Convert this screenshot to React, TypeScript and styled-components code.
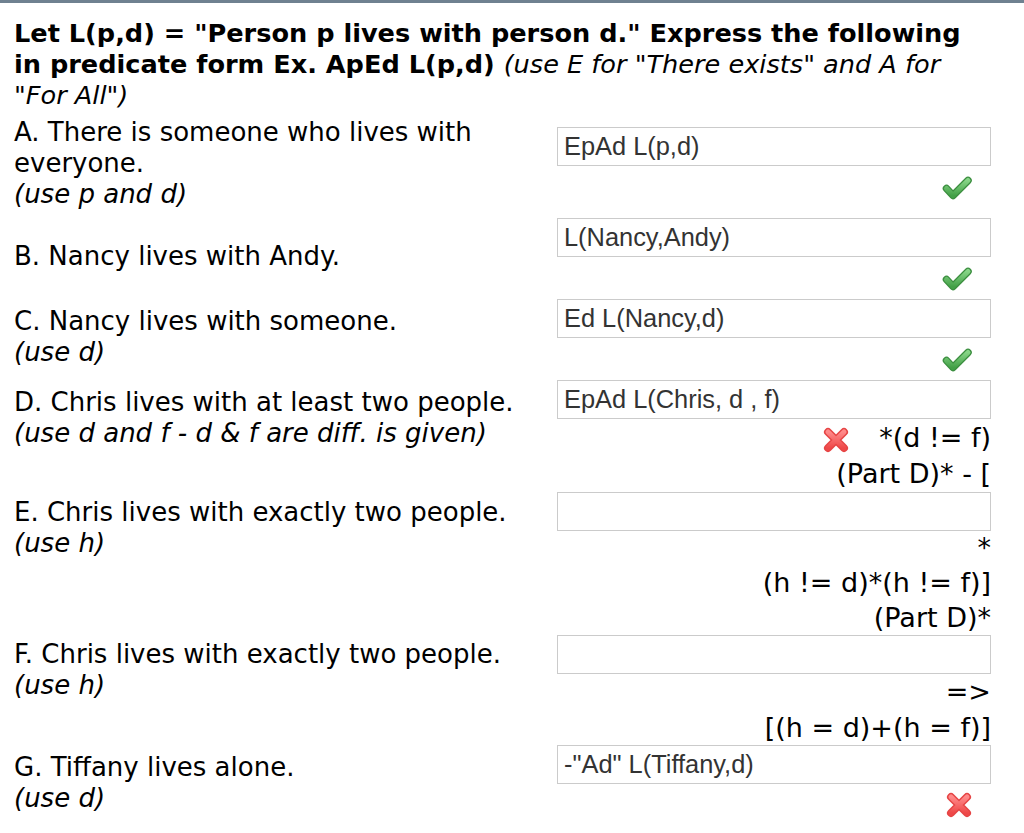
import React from "react";
import styled, { createGlobalStyle } from "styled-components";

const GlobalStyle = createGlobalStyle`
  body {
    margin: 0;
    background: #fff;
  }
`;

type Mark = "ok" | "bad";

type Line = {
  h: number;
  mark?: Mark;
  text?: string;
};

type Question = {
  label: string;
  hint?: string;
  value: string;
  promptTop: number;
  answerTop?: number;
  gap?: number;
  lines: Line[];
};

const questions: Question[] = [
  {
    label: "A. There is someone who lives with everyone.",
    hint: "(use p and d)",
    value: "EpAd L(p,d)",
    promptTop: 0,
    answerTop: 10.5,
    gap: 6,
    lines: [{ h: 52, mark: "ok" }],
  },
  {
    label: "B. Nancy lives with Andy.",
    value: "L(Nancy,Andy)",
    promptTop: 22.5,
    lines: [{ h: 42, mark: "ok" }],
  },
  {
    label: "C. Nancy lives with someone.",
    hint: "(use d)",
    value: "Ed L(Nancy,d)",
    promptTop: 6.5,
    lines: [{ h: 42, mark: "ok" }],
  },
  {
    label: "D. Chris lives with at least two people.",
    hint: "(use d and f - d & f are diff. is given)",
    value: "EpAd L(Chris, d , f)",
    promptTop: 6.5,
    lines: [
      { h: 37, mark: "bad", text: "*(d != f)" },
      { h: 36, text: "(Part D)* - [" },
    ],
  },
  {
    label: "E. Chris lives with exactly two people.",
    hint: "(use h)",
    value: "",
    promptTop: 4.5,
    lines: [
      { h: 34, text: "*" },
      { h: 35, text: "(h != d)*(h != f)]" },
      { h: 35, text: "(Part D)*" },
    ],
  },
  {
    label: "F. Chris lives with exactly two people.",
    hint: "(use h)",
    value: "",
    promptTop: 3.5,
    lines: [
      { h: 36, text: "=>" },
      { h: 35, text: "[(h = d)+(h = f)]" },
    ],
  },
  {
    label: "G. Tiffany lives alone.",
    hint: "(use d)",
    value: '-"Ad" L(Tiffany,d)',
    promptTop: 6.5,
    lines: [{ h: 42, mark: "bad" }],
  },
];

const CheckIcon = () => (
  <svg width="30" height="24" viewBox="0 0 30 24">
    <defs>
      <linearGradient id="okFill" x1="0" y1="0" x2="0" y2="1">
        <stop offset="0" stopColor="#86d486" />
        <stop offset="1" stopColor="#43a047" />
      </linearGradient>
    </defs>
    <path
      d="M4.5 12.5 L11 19.5 L26 4.5"
      fill="none"
      stroke="#3b8e3f"
      strokeWidth="7.5"
      strokeLinecap="round"
      strokeLinejoin="round"
    />
    <path
      d="M4.5 12.5 L11 19.5 L26 4.5"
      fill="none"
      stroke="url(#okFill)"
      strokeWidth="5"
      strokeLinecap="round"
      strokeLinejoin="round"
    />
  </svg>
);

const CrossIcon = () => (
  <svg width="26" height="26" viewBox="0 0 26 26">
    <defs>
      <linearGradient id="badFill" x1="0" y1="0" x2="0" y2="1">
        <stop offset="0" stopColor="#ff8a8a" />
        <stop offset="1" stopColor="#ee4848" />
      </linearGradient>
    </defs>
    <path
      d="M5 5 L21 21 M21 5 L5 21"
      fill="none"
      stroke="#e64545"
      strokeWidth="8"
      strokeLinecap="round"
    />
    <path
      d="M5 5 L21 21 M21 5 L5 21"
      fill="none"
      stroke="url(#badFill)"
      strokeWidth="5"
      strokeLinecap="round"
    />
  </svg>
);

const TopBar = styled.div`
  height: 3px;
  background: #6f8190;
`;

const Page = styled.div`
  padding: 14.5px 0 0 14px;
  font-family: "DejaVu Sans", Verdana, sans-serif;
  color: #000;
`;

const Title = styled.h1`
  margin: 0;
  width: 980px;
  font-size: 25.6px;
  line-height: 31px;
  font-weight: bold;
`;

const TitleHint = styled.em`
  font-weight: normal;
`;

const Row = styled.div<{ $gap?: number }>`
  display: grid;
  grid-template-columns: 543px 434px;
  align-items: start;
  margin-top: ${(p) => p.$gap ?? 0}px;
`;

const Prompt = styled.div<{ $top: number }>`
  padding-top: ${(p) => p.$top}px;
  font-size: 26px;
  line-height: 31px;
`;

const Note = styled.i`
  display: block;
`;

const Answer = styled.div<{ $top?: number }>`
  padding-top: ${(p) => p.$top ?? 0}px;
  display: flex;
  flex-direction: column;
`;

const Field = styled.input`
  display: block;
  box-sizing: border-box;
  width: 434px;
  height: 39px;
  margin: 0;
  padding: 0 6px;
  border: 1px solid #cbcbcb;
  background: #fff;
  color: #333;
  font: 25.4px "Liberation Sans", Arial, sans-serif;
  outline: none;
`;

const Feedback = styled.div<{ $h: number; $alone: boolean }>`
  height: ${(p) => p.$h}px;
  display: flex;
  justify-content: flex-end;
  align-items: flex-start;
  gap: 30px;
  padding-right: ${(p) => (p.$alone ? 19 : 0)}px;
  font-size: 27px;
  line-height: ${(p) => p.$h}px;
  white-space: pre;
`;

const MarkBox = styled.span<{ $mark: Mark }>`
  display: flex;
  margin-top: ${(p) => (p.$mark === "ok" ? 10 : 8)}px;
`;

export default function App() {
  return (
    <>
      <GlobalStyle />
      <TopBar />
      <Page>
        <Title>
          Let L(p,d) = "Person p lives with person d." Express the following in
          predicate form Ex. ApEd L(p,d){" "}
          <TitleHint>(use E for "There exists" and A for "For All")</TitleHint>
        </Title>
        {questions.map((q) => (
          <Row key={q.label} $gap={q.gap}>
            <Prompt $top={q.promptTop}>
              {q.label}
              {q.hint && <Note>{q.hint}</Note>}
            </Prompt>
            <Answer $top={q.answerTop}>
              <Field readOnly value={q.value} />
              {q.lines.map((l, i) => (
                <Feedback key={i} $h={l.h} $alone={!l.text}>
                  {l.mark && (
                    <MarkBox $mark={l.mark}>
                      {l.mark === "ok" ? <CheckIcon /> : <CrossIcon />}
                    </MarkBox>
                  )}
                  {l.text && <span>{l.text}</span>}
                </Feedback>
              ))}
            </Answer>
          </Row>
        ))}
      </Page>
    </>
  );
}
